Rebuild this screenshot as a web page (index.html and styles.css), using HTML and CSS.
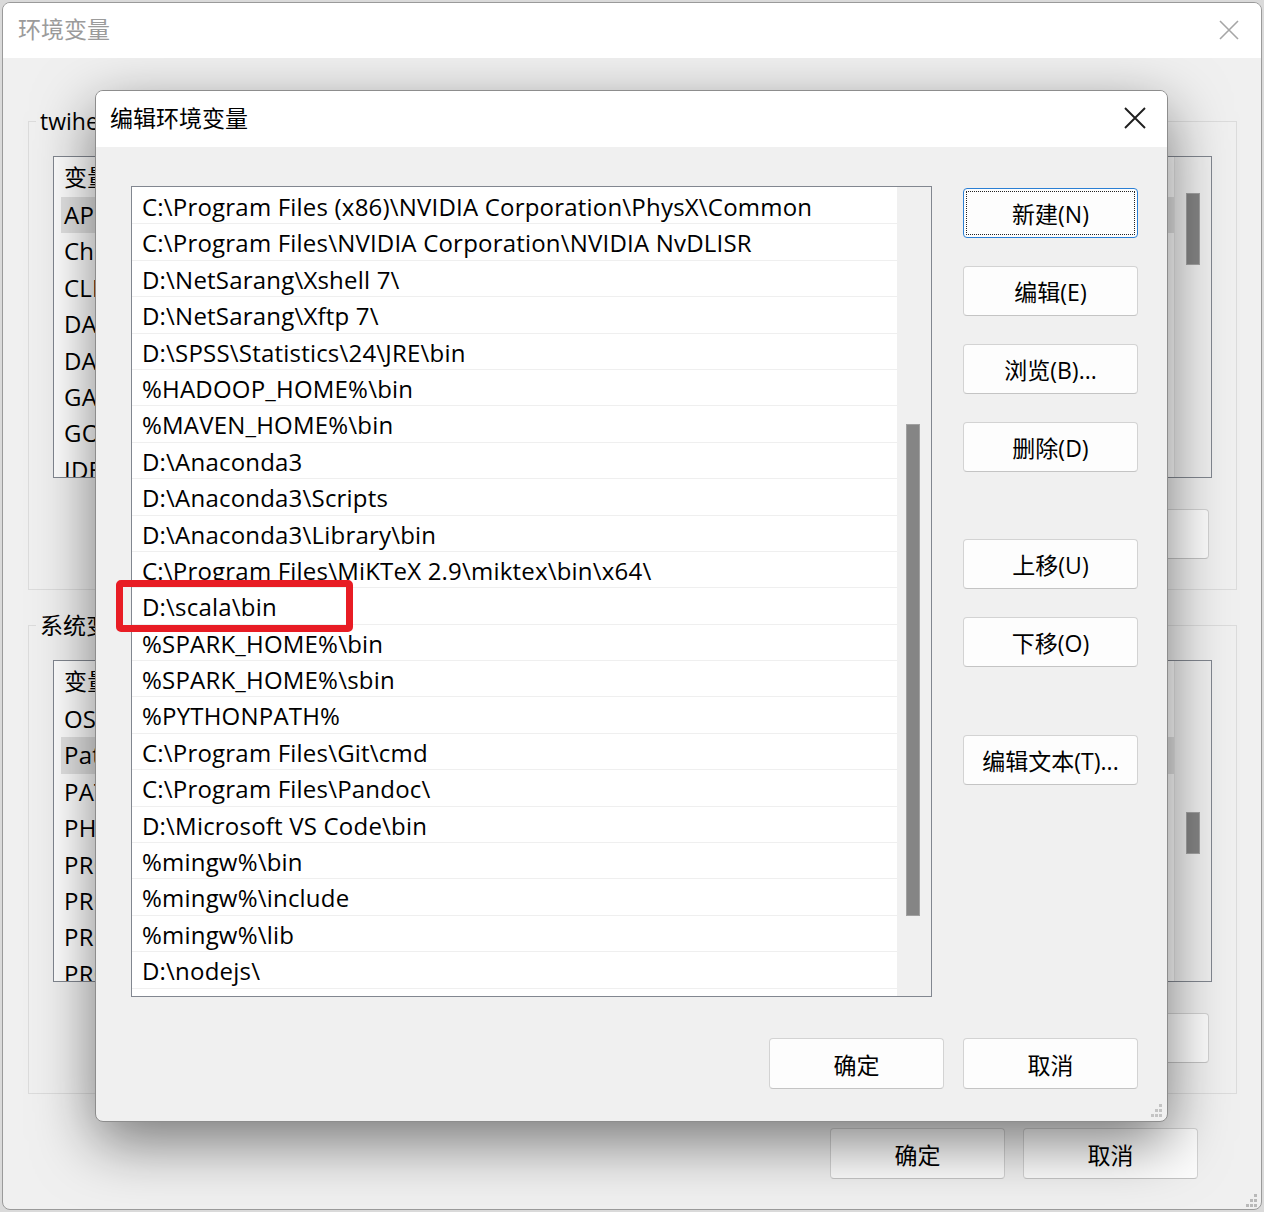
FILE: index.html
```html
<!DOCTYPE html>
<html>
<head lang="zh-CN">
    <meta charset="UTF-8">
    <title>环境变量</title>
    <link rel="stylesheet" href="styles.css">
</head>
<body>
<!--外层窗口：环境变量-->
<div class="win">
    <div class="win_title">
        <span class="win_name">环境变量</span>
        <svg class="win_close" width="20" height="20" viewBox="0 0 20 20"><path d="M1 1L19 19M19 1L1 19" stroke="#a6a6a6" stroke-width="1.6" fill="none"/></svg>
    </div>
    <div class="win_body">
        <!--用户变量-->
        <fieldset class="group">
            <legend>twihe 的用户变量(U)</legend>
            <div class="list">
                <div class="list_rows">
                    <div class="list_head"><span class="col_name">变量</span><span>值</span></div>
                    <div class="row sel">APPDATA</div>
                    <div class="row">ChocolateyLastPathUpdate</div>
                    <div class="row">CLION</div>
                    <div class="row">DATAGRIP</div>
                    <div class="row">DATASPELL</div>
                    <div class="row">GATEWAY</div>
                    <div class="row">GOLAND</div>
                    <div class="row">IDEA</div>
                </div>
                <div class="track"><div class="thumb thumb_u"></div></div>
            </div>
            <div class="group_btns">
                <button class="btn">新建(N)...</button>
                <button class="btn">编辑(E)...</button>
                <button class="btn">删除(D)</button>
            </div>
        </fieldset>
        <!--系统变量-->
        <fieldset class="group group_sys">
            <legend>系统变量(S)</legend>
            <div class="list">
                <div class="list_rows">
                    <div class="list_head"><span class="col_name">变量</span><span>值</span></div>
                    <div class="row">OS</div>
                    <div class="row sel">Path</div>
                    <div class="row">PATHEXT</div>
                    <div class="row">PHPSTORM</div>
                    <div class="row">PROCESSOR_ARCHITECTURE</div>
                    <div class="row">PROCESSOR_IDENTIFIER</div>
                    <div class="row">PROCESSOR_LEVEL</div>
                    <div class="row">PROCESSOR_REVISION</div>
                </div>
                <div class="track"><div class="thumb thumb_s"></div></div>
            </div>
            <div class="group_btns">
                <button class="btn">新建(W)...</button>
                <button class="btn">编辑(I)...</button>
                <button class="btn">删除(L)</button>
            </div>
        </fieldset>
        <div class="win_btns">
            <button class="btn btn_dim">确定</button>
            <button class="btn btn_dim">取消</button>
        </div>
    </div>
    <svg class="grip grip_win" width="15" height="14" viewBox="0 0 15 14"><g fill="#b9b9b9"><rect x="11" y="0" width="3" height="3"/><rect x="7" y="5" width="3" height="3"/><rect x="11" y="5" width="3" height="3"/><rect x="3" y="10" width="3" height="3"/><rect x="7" y="10" width="3" height="3"/><rect x="11" y="10" width="3" height="3"/></g></svg>

    <!--弹出的对话框：编辑环境变量-->
    <div class="dlg">
        <div class="dlg_title">
            <span>编辑环境变量</span>
            <svg width="22" height="22" viewBox="0 0 22 22"><path d="M1 1L21 21M21 1L1 21" stroke="#1f1f1f" stroke-width="1.9" fill="none"/></svg>
        </div>
        <div class="dlg_body">
            <div class="dlg_main">
                <div class="path_wrap">
                    <div class="path_list">
                        <div class="path_rows">
                            <div class="path_row">C:\Program Files (x86)\NVIDIA Corporation\PhysX\Common</div>
                            <div class="path_row">C:\Program Files\NVIDIA Corporation\NVIDIA NvDLISR</div>
                            <div class="path_row">D:\NetSarang\Xshell 7\</div>
                            <div class="path_row">D:\NetSarang\Xftp 7\</div>
                            <div class="path_row">D:\SPSS\Statistics\24\JRE\bin</div>
                            <div class="path_row">%HADOOP_HOME%\bin</div>
                            <div class="path_row">%MAVEN_HOME%\bin</div>
                            <div class="path_row">D:\Anaconda3</div>
                            <div class="path_row">D:\Anaconda3\Scripts</div>
                            <div class="path_row">D:\Anaconda3\Library\bin</div>
                            <div class="path_row">C:\Program Files\MiKTeX 2.9\miktex\bin\x64\</div>
                            <div class="path_row">D:\scala\bin</div>
                            <div class="path_row">%SPARK_HOME%\bin</div>
                            <div class="path_row">%SPARK_HOME%\sbin</div>
                            <div class="path_row">%PYTHONPATH%</div>
                            <div class="path_row">C:\Program Files\Git\cmd</div>
                            <div class="path_row">C:\Program Files\Pandoc\</div>
                            <div class="path_row">D:\Microsoft VS Code\bin</div>
                            <div class="path_row">%mingw%\bin</div>
                            <div class="path_row">%mingw%\include</div>
                            <div class="path_row">%mingw%\lib</div>
                            <div class="path_row">D:\nodejs\</div>
                        </div>
                        <div class="path_track"><div class="path_thumb"></div></div>
                    </div>
                    <!--红框标注-->
                    <div class="mark"></div>
                </div>
                <div class="side_btns">
                    <button class="btn focus">新建(N)</button>
                    <button class="btn">编辑(E)</button>
                    <button class="btn">浏览(B)...</button>
                    <button class="btn">删除(D)</button>
                    <button class="btn btn_up">上移(U)</button>
                    <button class="btn">下移(O)</button>
                    <button class="btn btn_text">编辑文本(T)...</button>
                </div>
            </div>
            <div class="dlg_foot">
                <button class="btn btn_foot">确定</button>
                <button class="btn btn_foot">取消</button>
            </div>
        </div>
        <svg class="grip grip_dlg" width="15" height="14" viewBox="0 0 15 14"><g fill="#c4c4c4"><rect x="11" y="0" width="3" height="3"/><rect x="7" y="5" width="3" height="3"/><rect x="11" y="5" width="3" height="3"/><rect x="3" y="10" width="3" height="3"/><rect x="7" y="10" width="3" height="3"/><rect x="11" y="10" width="3" height="3"/></g></svg>
    </div>
</div>
</body>
</html>
```

FILE: styles.css
```css
body {
    margin: 0;
    background: #dadada;
    font-family: "Open Sans", "Noto Sans CJK SC", sans-serif;
    font-size: 23px;
    color: #000;
}

/* 外层窗口 */
.win {
    position: relative;
    margin: 2px 0 0 2px;
    width: 1260px;
    height: 1208px;
    box-sizing: border-box;
    border: 1px solid #9a9a9a;
    border-radius: 8px;
    background: #f0f0f0;
    overflow: hidden;
}
.win_title {
    position: relative;
    z-index: 2;
    height: 55px;
    box-sizing: border-box;
    padding: 0 22px 5px 15px;
    background: #fff;
    display: flex;
    align-items: center;
    justify-content: space-between;
}
.win_close {
    margin-top: 4px;
}
.win_name {
    color: #9b9b9b;
}
.win_body {
    padding: 48px 24px 0 25px;
}

/* 分组框 */
.group {
    margin: 0;
    padding: 20px 24px 30px 24px;
    border: 1px solid #dcdcdc;
    min-width: 0;
}
.group legend {
    margin-left: -17px;
    padding: 0 4px;
    line-height: 30px;
}
.group_sys {
    margin-top: 20px;
}
.list {
    height: 322px;
    box-sizing: border-box;
    border: 1px solid #828790;
    background: #fff;
    display: flex;
}
.list_rows {
    flex: 1;
    overflow: hidden;
    padding-left: 7px;
    font-size: 24px;
    letter-spacing: 0.2px;
}
.list_head {
    height: 40px;
    line-height: 40px;
    padding-left: 3px;
    font-size: 23px;
    display: flex;
}
.col_name {
    width: 330px;
}
.row {
    height: 36.4px;
    line-height: 36.4px;
    padding-left: 3px;
    white-space: nowrap;
}
.row.sel {
    background: #e3e3e3;
}
.track {
    width: 36px;
    background: #f0f0f0;
    border-left: 1px solid #e6e6e6;
}
.thumb {
    width: 14px;
    margin: 0 auto;
    box-sizing: border-box;
    background: #858585;
    border: 1px solid #a3a3a3;
}
.thumb_u {
    height: 72px;
    margin-top: 36px;
}
.thumb_s {
    height: 42px;
    margin-top: 151px;
}
.group_btns {
    display: flex;
    justify-content: flex-end;
    gap: 18px;
    margin-top: 31px;
    padding-right: 3px;
}
.win_btns {
    display: flex;
    justify-content: flex-end;
    gap: 18px;
    margin-top: 34px;
    padding-right: 39px;
}

/* 按钮 */
.btn {
    width: 175px;
    height: 50px;
    box-sizing: border-box;
    padding: 0;
    border: 1px solid #d3d3d3;
    border-bottom-color: #c4c4c4;
    border-radius: 4px;
    background: #fdfdfd;
    font-family: inherit;
    font-size: 23px;
    color: #000;
    display: flex;
    align-items: center;
    justify-content: center;
}
.btn_dim {
    height: 51px;
}
.btn.focus {
    border-color: #2b7fd4;
    outline: 1px dotted #222;
    outline-offset: -4px;
}

.grip {
    position: absolute;
}
.grip_win {
    right: 3px;
    bottom: 1px;
}

/* 编辑环境变量 对话框 */
.dlg {
    position: absolute;
    z-index: 1;
    left: 92px;
    top: 87px;
    width: 1073px;
    height: 1032px;
    box-sizing: border-box;
    border: 1px solid #8d8d8d;
    border-radius: 8px;
    background: #f0f0f0;
    box-shadow: 0 20px 60px rgba(0, 0, 0, 0.5);
    display: flex;
    flex-direction: column;
    overflow: hidden;
}
.dlg_title {
    flex: none;
    height: 56px;
    box-sizing: border-box;
    padding: 0 21px 5px 14px;
    background: #fff;
    display: flex;
    align-items: center;
    justify-content: space-between;
}
.dlg_title svg {
    margin-top: 3px;
}
.dlg_body {
    flex: 1;
    display: flex;
    flex-direction: column;
    padding: 39px 29px 32px 35px;
}
.dlg_main {
    display: flex;
    gap: 31px;
}
.path_wrap {
    position: relative;
    width: 801px;
    height: 811px;
}
.path_list {
    height: 100%;
    box-sizing: border-box;
    border: 1px solid #828790;
    background: #fff;
    display: flex;
}
.path_rows {
    flex: 1;
    overflow: hidden;
    padding-top: 1px;
    font-size: 24px;
    letter-spacing: 0.2px;
}
.path_row {
    height: 36.4px;
    padding: 2px 0 0 10px;
    line-height: 33.4px;
    box-sizing: border-box;
    border-bottom: 1px solid #efefef;
    white-space: nowrap;
}
.path_track {
    width: 34px;
    background: #f0f0f0;
}
.path_thumb {
    width: 14px;
    height: 492px;
    margin: 237px 0 0 9px;
    box-sizing: border-box;
    background: #858585;
    border: 1px solid #a0a0a0;
}
.mark {
    position: absolute;
    left: -15px;
    top: 394px;
    width: 237px;
    height: 52px;
    box-sizing: border-box;
    border: 7px solid #e81c24;
    border-radius: 5px;
}
.side_btns {
    display: flex;
    flex-direction: column;
    gap: 28px;
    padding-top: 2px;
}
.side_btns .btn_up {
    margin-top: 39px;
}
.side_btns .btn_text {
    margin-top: 40px;
}
.dlg_foot {
    display: flex;
    justify-content: flex-end;
    gap: 19px;
    margin-top: auto;
}
.btn_foot {
    height: 51px;
}
.grip_dlg {
    right: 4px;
    bottom: 3px;
}
```
